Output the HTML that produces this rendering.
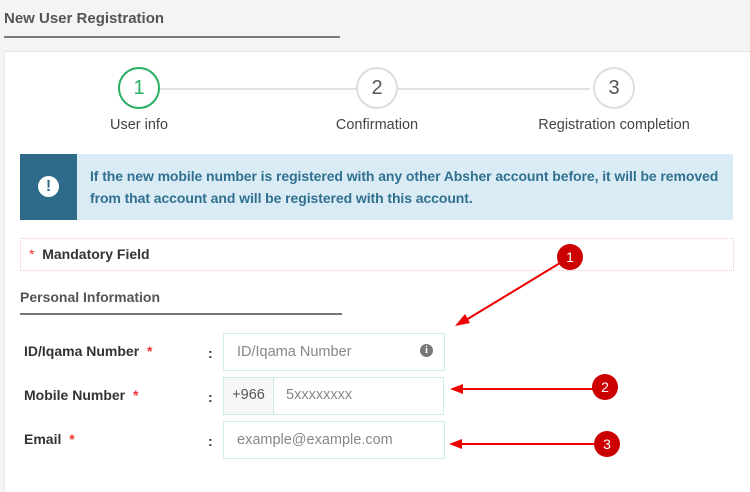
<!DOCTYPE html>
<html><head><meta charset="utf-8"><style>
body{margin:0;width:750px;height:485px;background:#f4f4f4;font-family:"Liberation Sans",sans-serif;position:relative;overflow:hidden}
.a{position:absolute}
.title{left:4px;top:10px;font-size:15px;font-weight:bold;color:#555}
.card{left:4px;top:51px;width:746px;height:440px;background:#fff;border-top:1px solid #e6e6e6;border-left:1px solid #e6e6e6}
.circ{width:38px;height:38px;border-radius:50%;border:2px solid #ddd;background:#fff;text-align:center;line-height:38px;font-size:20px;color:#555}
.lbl{font-size:14.5px;color:#444;text-align:center;width:200px}
.fl{font-size:14px;font-weight:bold;color:#333}
.st{color:#e33;margin-left:4px}
.inp{border:1px solid #cdeee3;background:#fff;font-size:14.5px;color:#888;box-sizing:border-box}
</style></head><body>
<div class="a title">New User Registration</div>
<div class="a" style="left:4px;top:36px;width:336px;height:2px;background:#777"></div>
<div class="a card"></div>
<div class="a" style="left:160px;top:88px;width:430px;height:2px;background:#e2e2e2"></div>
<div class="a circ" style="left:118px;top:67px;border-color:#27ae60;color:#27ae60">1</div>
<div class="a circ" style="left:356px;top:67px">2</div>
<div class="a circ" style="left:593px;top:67px">3</div>
<div class="a lbl" style="left:39px;top:117px">User info</div>
<div class="a lbl" style="left:277px;top:117px">Confirmation</div>
<div class="a lbl" style="left:514px;top:117px">Registration completion</div>
<div class="a" style="left:20px;top:154px;width:713px;height:66px;background:#d9ecf5"></div>
<div class="a" style="left:20px;top:154px;width:57px;height:66px;background:#2e6b8a"></div>
<div class="a" style="left:38px;top:176px;width:21px;height:21px;border-radius:50%;background:#fff;color:#2e6b8a;font-weight:bold;font-size:16px;text-align:center;line-height:21px">!</div>
<div class="a" style="left:90px;top:165px;width:640px;font-size:14px;font-weight:bold;color:#31708f;line-height:22px;letter-spacing:-0.08px">If the new mobile number is registered with any other Absher account before, it will be removed<br>from that account and will be registered with this account.</div>
<div class="a" style="left:20px;top:238px;width:712px;height:31px;border:1px dotted #f3c7d0"></div>
<div class="a" style="left:29px;top:246px;font-size:14px;font-weight:bold;color:#333"><span style="color:#e33;font-weight:normal">*</span>&nbsp; Mandatory Field</div>
<div class="a" style="left:20px;top:289px;font-size:14px;font-weight:bold;color:#555">Personal Information</div>
<div class="a" style="left:20px;top:313px;width:322px;height:2px;background:#777"></div>
<div class="a fl" style="left:24px;top:343px">ID/Iqama Number <span class="st">*</span></div>
<div class="a fl" style="left:24px;top:387px">Mobile Number <span class="st">*</span></div>
<div class="a fl" style="left:24px;top:431px">Email <span class="st">*</span></div>
<div class="a fl" style="left:208px;top:345px">:</div>
<div class="a fl" style="left:208px;top:389px">:</div>
<div class="a fl" style="left:208px;top:433px">:</div>
<div class="a inp" style="left:223px;top:333px;width:222px;height:38px;padding:10px 13px">ID/Iqama Number</div>
<div class="a" style="left:420px;top:344px;width:13px;height:13px;border-radius:50%;background:#777;color:#fff;font-size:10px;font-weight:bold;text-align:center;line-height:13px;font-family:'Liberation Serif',serif">i</div>
<div class="a inp" style="left:223px;top:377px;width:221px;height:38px"></div>
<div class="a" style="left:224px;top:378px;width:49px;height:36px;background:#f7f7f7;border-right:1px solid #cdeee3;font-size:14.5px;color:#555;text-align:center;line-height:34px">+966</div>
<div class="a" style="left:286px;top:387px;font-size:14.5px;color:#888">5xxxxxxxx</div>
<div class="a inp" style="left:223px;top:421px;width:222px;height:38px;padding:10px 13px">example@example.com</div>
<svg class="a" style="left:0;top:0" width="750" height="485">
<g stroke="#e00" stroke-width="2" fill="none">
<path d="M560,263 L466,320"/><path d="M605,389 L462,389"/><path d="M607,444 L460,444"/>
</g>
<g fill="#e00"><path d="M455,326 L465,314 L470,323 z"/><path d="M450,389 L463,384 L463,394 z"/><path d="M449,444 L462,439 L462,449 z"/></g>
<g fill="#c00"><circle cx="570" cy="257" r="13"/><circle cx="605" cy="387" r="13"/><circle cx="607" cy="444" r="13"/></g>
<g fill="#fff" font-size="14" text-anchor="middle" font-family="Liberation Sans"><text x="570" y="262">1</text><text x="605" y="392">2</text><text x="607" y="449">3</text></g>
</svg>
</body></html>
